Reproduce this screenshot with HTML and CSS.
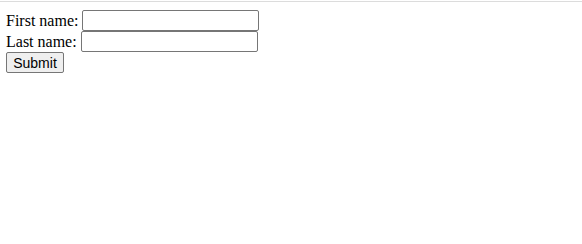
FILE: index.html
```html
<!DOCTYPE html>
<html>
<head>
<meta charset="utf-8">
<link rel="stylesheet" href="styles.css">
</head>
<body>
<div class="topline"></div>
<form class="form">
<div class="row">First name: <input type="text" class="field"></div>
<div class="row">Last name: <input type="text" class="field"></div>
<div class="row"><button type="button" class="btn">Submit</button></div>
</form>
</body>
</html>
```
FILE: styles.css
```css
html, body { margin: 0; padding: 0; background: #fff; }
body { font-family: "Liberation Serif", serif; font-size: 16px; color: #000; }
.topline { height: 1px; margin-top: 1px; background: #dcdcdc; }
.form { padding: 8px 6px 0 6px; }
.row { height: 21px; line-height: 21px; display: flex; align-items: center; white-space: pre; }
.field { width: 177px; height: 21px; box-sizing: border-box; border: 1px solid #767676; border-radius: 2px; margin: 0; padding: 1px 2px; font-size: 13px; }
.btn { font-family: "Liberation Sans", sans-serif; font-size: 14px; height: 21px; width: 58px; box-sizing: border-box; padding: 0 6px; border: 1px solid #767676; border-radius: 2px; background: #efefef; color: #000; margin: 0; }
```
